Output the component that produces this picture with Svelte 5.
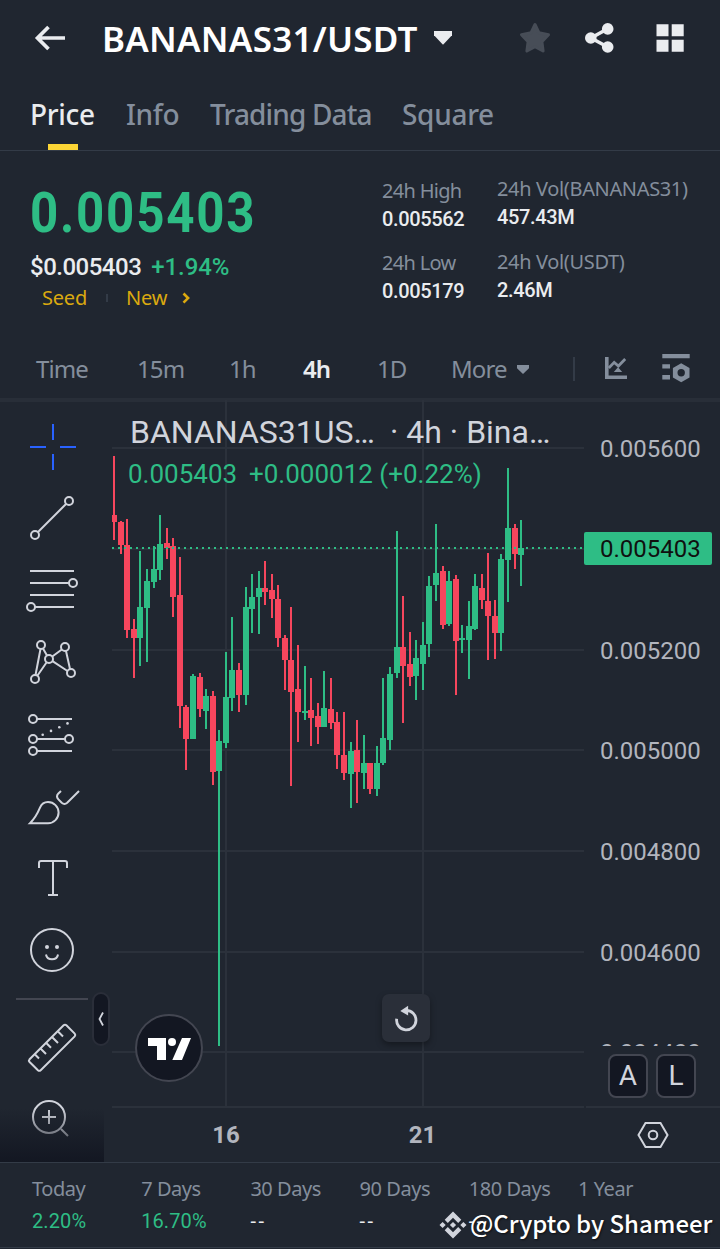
<script>
	const tabs = ['Price', 'Info', 'Trading Data', 'Square'];
	let activeTab = $state('Price');

	const intervals = ['Time', '15m', '1h', '4h', '1D'];
	let activeInterval = $state('4h');

	const stats = [
		[
			{ label: '24h High', value: '0.005562' },
			{ label: '24h Low', value: '0.005179' }
		],
		[
			{ label: '24h Vol(BANANAS31)', value: '457.43M' },
			{ label: '24h Vol(USDT)', value: '2.46M' }
		]
	];

	const performance = [
		{ label: 'Today', value: '2.20%', up: true },
		{ label: '7 Days', value: '16.70%', up: true },
		{ label: '30 Days', value: '--' },
		{ label: '90 Days', value: '--' },
		{ label: '180 Days', value: '--' },
		{ label: '1 Year', value: '' }
	];

	const gridRows = [448, 549, 650, 750, 851, 952, 1052];
	const gridCols = [226, 423];

	const priceLabels = [
		{ y: 448, text: '0.005600' },
		{ y: 650, text: '0.005200' },
		{ y: 750, text: '0.005000' },
		{ y: 851, text: '0.004800' },
		{ y: 952, text: '0.004600' },
		{ y: 1052, text: '0.004400' }
	];

	// x, high, low, body top, body bottom, rising
	const candles = [
		[113, 456, 540, 515, 522, 0],
		[120, 521, 554, 522, 545, 0],
		[126, 519, 638, 545, 630, 0],
		[133, 619, 678, 629, 638, 0],
		[139, 551, 666, 607, 638, 1],
		[146, 569, 662, 581, 608, 1],
		[153, 546, 588, 569, 582, 1],
		[159, 515, 580, 544, 570, 1],
		[166, 528, 559, 543, 548, 0],
		[172, 538, 617, 546, 597, 0],
		[179, 557, 728, 595, 706, 0],
		[185, 705, 770, 707, 739, 0],
		[192, 674, 739, 676, 739, 1],
		[199, 673, 717, 677, 709, 0],
		[205, 689, 729, 696, 711, 1],
		[212, 691, 785, 696, 772, 0],
		[218, 730, 1046, 741, 771, 1],
		[225, 652, 748, 697, 743, 1],
		[231, 617, 711, 670, 698, 1],
		[238, 663, 712, 670, 695, 0],
		[245, 587, 705, 607, 695, 1],
		[251, 574, 633, 597, 609, 1],
		[258, 571, 634, 588, 597, 1],
		[264, 561, 605, 588, 592, 0],
		[271, 574, 618, 590, 599, 0],
		[277, 585, 647, 599, 638, 0],
		[284, 635, 690, 638, 660, 0],
		[290, 607, 786, 660, 692, 0],
		[297, 645, 742, 689, 712, 0],
		[304, 666, 720, 711, 713, 1],
		[310, 678, 746, 710, 718, 0],
		[317, 703, 744, 716, 727, 0],
		[323, 671, 727, 708, 727, 1],
		[330, 678, 729, 709, 723, 0],
		[336, 712, 769, 722, 755, 0],
		[343, 712, 780, 755, 773, 0],
		[350, 742, 808, 751, 774, 1],
		[356, 720, 803, 750, 772, 0],
		[363, 735, 789, 763, 773, 1],
		[369, 763, 794, 763, 789, 0],
		[376, 746, 796, 763, 789, 1],
		[382, 678, 765, 738, 763, 1],
		[389, 667, 750, 674, 740, 1],
		[396, 531, 678, 647, 673, 1],
		[402, 596, 723, 647, 666, 0],
		[409, 632, 686, 664, 677, 0],
		[415, 640, 700, 658, 676, 1],
		[422, 622, 690, 645, 664, 1],
		[428, 576, 657, 586, 644, 1],
		[435, 524, 601, 573, 585, 1],
		[442, 566, 629, 571, 625, 0],
		[448, 571, 626, 581, 624, 1],
		[455, 575, 695, 579, 641, 0],
		[461, 625, 653, 638, 640, 1],
		[468, 601, 679, 626, 640, 1],
		[474, 574, 630, 586, 629, 1],
		[481, 574, 609, 588, 600, 0],
		[487, 553, 660, 601, 616, 0],
		[494, 600, 659, 616, 633, 0],
		[500, 554, 651, 559, 633, 1],
		[507, 468, 602, 528, 560, 1],
		[514, 524, 569, 528, 554, 0],
		[520, 520, 586, 548, 555, 1]
	];
</script>

<div class="screen">
	<header class="topbar">
		<svg class="back" width="36" height="32" viewBox="32 22 36 32">
			<path d="M65 38H38M48.5 27 37.5 38l11 11" />
		</svg>
		<h1>BANANAS31/USDT</h1>
		<svg class="solid caret" width="18" height="14" viewBox="434 31 18 14">
			<path d="M434 31h18v4.2l-9 9.6-9-9.6z" />
		</svg>
		<svg class="star" width="32" height="32" viewBox="519 22 32 32">
			<path
				d="M535 24.5l3.9 8.2 9.6 1.9-6.6 7 1.2 9.4-8.1-4.3-8.1 4.3 1.2-9.4-6.6-7 9.6-1.9z"
			/>
		</svg>
		<svg class="solid share" width="32" height="32" viewBox="583 22 32 32">
			<path class="stroke" d="M607.7 28.8 591 38l16.7 9" />
			<circle cx="607.7" cy="28.9" r="5.8" />
			<circle cx="590.8" cy="38" r="5.8" />
			<circle cx="607.7" cy="47" r="5.8" />
		</svg>
		<svg class="solid apps" width="30" height="30" viewBox="655 23 30 30">
			<path
				d="M656.5 24.3h12v12h-12zM671.7 24.3h12v12h-12zM656.5 39.7h12v12h-12zM671.7 39.7h12v12h-12z"
			/>
		</svg>
	</header>

	<nav class="tabs">
		{#each tabs as tab}
			<button class:active={tab === activeTab} onclick={() => (activeTab = tab)}>{tab}</button>
		{/each}
	</nav>

	<section class="ticker">
		<div class="quote">
			<div class="last">0.005403</div>
			<div class="fiat"><span>$0.005403</span><span class="up">+1.94%</span></div>
			<div class="tags">
				<span>Seed</span>
				<i></i>
				<span>New</span>
				<svg width="9" height="12" viewBox="182 292 9 12">
					<path d="M183.5 293.5l4.6 4.6-4.6 4.6" />
				</svg>
			</div>
		</div>
		{#each stats as column, i}
			<dl class="stats" class:volume={i === 1}>
				{#each column as stat}
					<dt>{stat.label}</dt>
					<dd>{stat.value}</dd>
				{/each}
			</dl>
		{/each}
	</section>

	<div class="intervals">
		{#each intervals as interval}
			<button
				class:active={interval === activeInterval}
				onclick={() => (activeInterval = interval)}>{interval}</button
			>
		{/each}
		<button class="more">
			<span>More</span>
			<svg width="12" height="9" viewBox="515 363 12 9">
				<path d="M515 363h12v3.2l-6 5.8-6-5.8z" />
			</svg>
		</button>
		<i></i>
		<svg class="tool" width="24" height="24" viewBox="604 356 24 24">
			<path class="axis" d="M606.8 357v20.2H627" />
			<path class="trend" d="M608.8 368l5.4-5.6 4.2 3.6 6.8-6.9" />
			<path d="M618 367.3l4.2 4.7h-8.4z" />
		</svg>
		<svg class="tool" width="28" height="30" viewBox="662 354 28 30">
			<path
				d="M662.3 355h27.4v4.3h-27.4zM662.3 365.3h7.7v4.3h-7.7zM662.3 376h7.7v4.5h-7.7z"
			/>
			<path
				fill-rule="evenodd"
				d="M681.2 364.3l8.3 4.7v9.4l-8.3 4.8-8.3-4.8V369zM681.2 370a3.7 3.7 0 1 0 0 7.4 3.7 3.7 0 0 0 0-7.4z"
			/>
		</svg>
	</div>

	<section class="chart">
		<aside class="toolbar">
			<!-- cursor -->
			<svg class="cross" viewBox="0 0 104 72">
				<path d="M53 13v16M53 43v16M30 36h16M60 36h16" />
			</svg>
			<!-- trend line -->
			<svg viewBox="0 0 104 72">
				<circle cx="69" cy="18" r="4" />
				<circle cx="35" cy="52" r="4" />
				<path d="M38 49l28-28" />
			</svg>
			<!-- fib retracement -->
			<svg viewBox="0 0 104 72">
				<path d="M30 16h44M30 28h39M30 40h44M35 52h39" />
				<circle cx="73" cy="28" r="4" />
				<circle cx="31" cy="52" r="4" />
			</svg>
			<!-- pattern -->
			<svg viewBox="0 0 104 72">
				<path
					d="M35.500 48l5-26M43 21.500l4 7M46.500 35.500l-9 13M52.300 29.500l9.500-7M66 24l4 18M67.500 44l-15-9.800"
				/>
				<circle cx="41" cy="18" r="4" />
				<circle cx="65" cy="20" r="4" />
				<circle cx="49" cy="32" r="4" />
				<circle cx="35" cy="52" r="4" />
				<circle cx="71" cy="46" r="4" />
			</svg>
			<!-- forecast -->
			<svg viewBox="0 0 104 72">
				<path d="M37 20h35M37 40h28M37 52h35" />
				<circle cx="33" cy="20" r="4" />
				<circle cx="33" cy="40" r="4" />
				<circle cx="69" cy="40" r="4" />
				<circle cx="33" cy="52" r="4" />
				<g class="dots">
					<circle cx="42.700" cy="35.700" r="1.300" />
					<circle cx="51" cy="31.900" r="1.300" />
					<circle cx="59.300" cy="28.200" r="1.300" />
					<circle cx="67.500" cy="24.400" r="1.300" />
				</g>
			</svg>
			<!-- brush -->
			<svg viewBox="0 0 104 72">
				<path
					d="M30 52.200H48a10.600 10.600 0 0 0 0-21.200c-4.300 0-6.700 2.500-8 5.700-2.400 5.700-5 10.700-10 15.500z"
				/>
				<path d="M61 20l-2.600 2.400q-2.800 3 0 6l3.300 3.400q2.800 2.300 5.500 0L79 20" />
			</svg>
			<!-- text -->
			<svg viewBox="0 0 104 72">
				<path d="M39 25v-5q0-2 2-2h24q2 0 2 2v5M53 18v34M48 52h10" />
			</svg>
			<!-- emoji -->
			<svg viewBox="0 0 104 72">
				<circle cx="52" cy="35" r="21" />
				<path d="M46 39.500c1 6.300 11 6.300 12 0" />
				<g class="dots">
					<circle cx="47" cy="32" r="2" />
					<circle cx="57" cy="32" r="2" />
				</g>
			</svg>
			<hr />
			<!-- measure -->
			<svg viewBox="0 0 104 72">
				<path
					d="M63.600 13.300q1.400-1.200 2.800 0l8.300 8.300q1.200 1.400 0 2.800L40.700 58.200q-1.400 1.200-2.800 0L29.600 50q-1.200-1.400 0-2.800z"
				/>
				<path
					d="M35 42.500l4 4M40.500 36.500l5.500 5.500M46.300 31l4.700 4.700M52 25l6 6M58 19.500l5 5"
				/>
			</svg>
			<!-- zoom in -->
			<svg viewBox="0 0 104 72">
				<circle cx="49" cy="33" r="16" />
				<path d="M42 33h14M49 26v14M61 45l7 7" />
			</svg>
			<div class="fade"></div>
			<button class="collapse" aria-label="Hide drawings toolbar">
				<svg width="6" height="16" viewBox="0 0 6 16"><path d="M5 1.500L1.500 8 5 14.500" /></svg>
			</button>
		</aside>

		<svg class="plot" width="616" height="762" viewBox="104 400 616 762">
			<g class="grid">
				{#each gridRows as y}
					<path d="M112 {y}H584" />
				{/each}
				{#each gridCols as x}
					<path d="M{x} 400V1106" />
				{/each}
				<path d="M112 1107H584M586 1107H720" />
			</g>

			{#each candles as [x, high, low, top, bottom, up]}
				<g class={up ? 'rise' : 'fall'}>
					<rect {x} y={high} width="2" height={low - high} />
					<rect
						x={Math.max(112, x - 2)}
						y={top}
						width={x === 113 ? 5 : 6}
						height={bottom - top}
					/>
				</g>
			{/each}
			<path class="last-line" d="M112 548H584" />

			<g class="legend">
				<text class="symbol" x="130" y="443">BANANAS31US…</text>
				<text class="symbol" x="390" y="443">· 4h · Bina…</text>
				<text class="change" x="128" y="483">0.005403</text>
				<text class="change" x="249" y="483">+0.000012 (+0.22%)</text>
			</g>

			<clipPath id="axis-clip"><rect x="584" y="400" width="136" height="646" /></clipPath>
			<g class="prices" clip-path="url(#axis-clip)">
				{#each priceLabels as label}
					<text x="600" y={label.y + 9}>{label.text}</text>
				{/each}
				<rect x="584" y="532" width="128" height="33" rx="2" />
				<text class="current" x="600" y="557">0.005403</text>
			</g>

			<g class="dates">
				<text x="226" y="1143">16</text>
				<text x="422.500" y="1143">21</text>
			</g>

			<g class="hex">
				<path d="M645.500 1123h15l7 12-7 12h-15l-7-12z" />
				<circle cx="653" cy="1135" r="4.300" />
			</g>

			<g class="brand">
				<circle cx="169" cy="1048" r="33" />
				<path d="M148 1038h18v22h-9v-14h-9zM182 1038h9l-9 22h-9.700z" />
				<circle class="dot" cx="172" cy="1042" r="4" />
			</g>
		</svg>

		<button class="reset" aria-label="Reset chart">
			<svg width="48" height="48" viewBox="382 994 48 48">
				<path class="arc" d="M396.700 1018.700A9.700 9.700 0 1 0 406 1010.500" />
				<path d="M400.300 1011l7.800-5.300v9.800z" />
			</svg>
		</button>
		<div class="scale">
			<button>A</button>
			<button>L</button>
		</div>
	</section>

	<footer class="performance">
		{#each performance as item}
			<div>
				<span>{item.label}</span>
				<b class:up={item.up} class:empty={item.value === '--'}>{item.value}</b>
			</div>
		{/each}
		<div class="watermark">
			<svg width="28" height="28" viewBox="0 0 28 28">
				<path
					d="M14 .5l8.300 8.300-3.100 3.100L14 6.700l-5.200 5.200-3.100-3.100zM14 27.500l8.300-8.300-3.100-3.100-5.200 5.200-5.200-5.200-3.100 3.100zM14 10.900l3.100 3.100-3.100 3.100-3.100-3.100zM3.600 10.900L6.700 14l-3.100 3.100L.5 14zM24.400 10.900l3.100 3.100-3.100 3.100-3.100-3.100z"
				/>
			</svg>
			<span>@Crypto by Shameer</span>
		</div>
	</footer>
</div>

<style>
	:global(body) {
		background: #202630;
	}

	.screen {
		width: 720px;
		height: 1249px;
		overflow: hidden;
		background: #202630;
		color: #eaecef;
		font-family: 'Noto Sans', sans-serif;
	}

	svg {
		display: block;
		flex: none;
	}

	button {
		padding: 0;
		border: 0;
		background: none;
		color: inherit;
		font: inherit;
		letter-spacing: inherit;
		text-align: left;
		white-space: nowrap;
	}

	.topbar {
		display: flex;
		align-items: center;
		height: 76px;
		padding-left: 32px;
	}

	.topbar h1 {
		width: 332px;
		margin: 2px 0 0 34px;
		color: #fff;
		font-size: 35px;
		font-weight: 600;
		line-height: 48px;
		letter-spacing: 0.25px;
		white-space: nowrap;
	}

	.back path {
		fill: none;
		stroke: #eaecef;
		stroke-width: 3.7;
	}

	.solid {
		fill: #eaecef;
	}

	.star {
		margin-left: 67px;
		fill: #474d57;
		stroke: #474d57;
		stroke-width: 3;
		stroke-linejoin: round;
	}

	.share {
		margin-left: 32px;
	}

	.share .stroke {
		fill: none;
		stroke: #eaecef;
		stroke-width: 3.5;
	}

	.apps {
		margin-left: 40px;
	}

	.tabs {
		display: grid;
		grid-template-columns: 96px 84px 192px auto;
		height: 74px;
		padding-left: 30px;
		border-bottom: 1px solid #333b47;
		color: #848e9c;
		font-size: 28px;
		font-weight: 500;
		letter-spacing: -0.3px;
	}

	.tabs button {
		position: relative;
		height: 74px;
		line-height: 76px;
	}

	.tabs button:nth-child(3) {
		letter-spacing: -0.85px;
	}

	.tabs .active {
		color: #eaecef;
	}

	.tabs .active::after {
		content: '';
		position: absolute;
		left: 18px;
		bottom: 0;
		width: 30px;
		height: 6px;
		background: #fcd535;
	}

	.ticker {
		display: grid;
		grid-template-columns: 352px 115px auto;
		height: 189px;
		padding-left: 30px;
	}

	/* narrow, widely spaced numerals */
	.last {
		height: 60px;
		padding-top: 32px;
		color: #2ebd85;
		font: 700 56px/60px Roboto, sans-serif;
		letter-spacing: 2px;
		transform: scaleX(0.88);
		transform-origin: left;
	}

	.up {
		color: #2ebd85;
	}

	.fiat {
		display: flex;
		gap: 10px;
		height: 48px;
		font: 500 24px/48px Roboto, sans-serif;
		letter-spacing: -0.5px;
	}

	.fiat .up {
		letter-spacing: -0.1px;
	}

	.tags {
		display: flex;
		align-items: center;
		height: 14px;
		padding-left: 12px;
		color: #dba90f;
		font-size: 20px;
		line-height: 14px;
		letter-spacing: -0.2px;
	}

	.tags i {
		width: 2px;
		height: 8px;
		margin: 0 18px 0 19px;
		background: #333b47;
	}

	.tags svg {
		margin-left: 15px;
	}

	.tags path {
		fill: none;
		stroke: #dba90f;
		stroke-width: 2.6;
	}

	.stats {
		margin: 26px 0 0;
		font-size: 20px;
		line-height: 28px;
	}

	.stats.volume {
		margin-top: 23px;
		line-height: 29px;
	}

	.stats dt {
		color: #848e9c;
		letter-spacing: -0.7px;
	}

	.stats.volume dt {
		letter-spacing: -0.35px;
	}

	.stats dd {
		margin: 0 0 16px;
		font-family: Roboto, sans-serif;
		font-weight: 500;
		letter-spacing: -0.35px;
	}

	.stats.volume dd {
		margin-bottom: 15px;
	}

	.intervals {
		display: grid;
		grid-template-columns: 101px 92px 74px 74px 74px 122px 31px 58px auto;
		align-items: center;
		height: 58px;
		padding-left: 36px;
		border-bottom: 4px solid #282e38;
		color: #848e9c;
		font-size: 24px;
		line-height: 58px;
		letter-spacing: -0.9px;
	}

	.intervals .active {
		color: #eaecef;
		font-weight: 600;
	}

	.intervals i {
		width: 2px;
		height: 24px;
		background: #333b47;
	}

	.intervals svg {
		fill: #848e9c;
	}

	.more {
		display: flex;
		align-items: center;
		gap: 10px;
	}

	.intervals .tool {
		margin-bottom: 2px;
	}

	.tool .axis,
	.tool .trend {
		fill: none;
		stroke: #848e9c;
		stroke-width: 3.6;
	}

	.tool .trend {
		stroke-width: 2.8;
	}

	.chart {
		position: relative;
		display: flex;
		height: 760px;
		border-bottom: 1px solid #333b47;
		font-family: Roboto, sans-serif;
	}

	.toolbar {
		position: relative;
		width: 104px;
		height: 751px;
		padding-top: 9px;
	}

	.toolbar > svg {
		width: 104px;
		height: 72px;
		fill: none;
		stroke: #d1d4dc;
		stroke-width: 2;
	}

	.toolbar .cross {
		stroke: #2962ff;
	}

	.toolbar .dots {
		fill: #d1d4dc;
		stroke: none;
	}

	.toolbar hr {
		width: 72px;
		height: 2px;
		margin: 11px 16px 12px;
		border: 0;
		background: #434651;
	}

	.fade {
		position: absolute;
		left: 0;
		bottom: 0;
		width: 104px;
		height: 54px;
		background: linear-gradient(rgba(19, 23, 34, 0), #131722);
	}

	.collapse {
		position: absolute;
		left: 92px;
		top: 590px;
		display: grid;
		place-items: center;
		box-sizing: border-box;
		width: 18px;
		height: 54px;
		border: 2px solid #2a2e39;
		border-radius: 9px;
		background: #131722;
		z-index: 1;
	}

	.collapse path {
		fill: none;
		stroke: #d1d4dc;
		stroke-width: 1.8;
	}

	.plot {
		height: 762px;
		margin-top: -2px;
	}

	.grid {
		fill: none;
		stroke: #2b313b;
		stroke-width: 2;
	}

	.rise {
		fill: #2ebd85;
	}

	.fall {
		fill: #f6465d;
	}

	.last-line {
		stroke: #2ebd85;
		stroke-width: 2;
		stroke-dasharray: 2 4;
	}

	.symbol {
		fill: #d1d4dc;
		font-size: 32px;
	}

	.change {
		fill: #2ebd85;
		font-size: 26px;
	}

	.prices text {
		fill: #b2b5be;
		font-size: 24px;
	}

	.prices rect {
		fill: #2ebd85;
	}

	.prices .current {
		fill: #101010;
	}

	.dates {
		fill: #b2b5be;
		font-size: 24px;
		font-weight: 700;
		text-anchor: middle;
	}

	.hex {
		fill: none;
		stroke: #d1d4dc;
		stroke-width: 2;
	}

	.brand circle {
		fill: #131722;
		stroke: #434651;
		stroke-width: 2;
	}

	.brand path,
	.brand .dot {
		fill: #fff;
		stroke: none;
	}

	.reset {
		position: absolute;
		left: 382px;
		top: 592px;
		width: 48px;
		height: 48px;
		border-radius: 7px;
		background: #2a2f39;
		box-shadow: 0 3px 6px rgba(0, 0, 0, 0.35);
	}

	.reset svg {
		fill: #d1d4dc;
	}

	.reset .arc {
		fill: none;
		stroke: #d1d4dc;
		stroke-width: 2.8;
	}

	.scale {
		position: absolute;
		left: 608px;
		top: 652px;
		display: flex;
		gap: 8px;
	}

	.scale button {
		box-sizing: border-box;
		width: 40px;
		height: 44px;
		border: 2px solid #434651;
		border-radius: 8px;
		background: #131722;
		color: #d1d4dc;
		font-size: 28px;
		line-height: 40px;
		text-align: center;
	}

	.performance {
		position: relative;
		display: grid;
		grid-template-columns: repeat(6, 109.2px);
		height: 84px;
		padding-left: 32px;
		border-bottom: 1px solid #333b47;
		font-size: 20px;
	}

	.performance > div:not(.watermark) {
		display: flex;
		flex-direction: column;
		padding-top: 10px;
		line-height: 32px;
	}

	.performance div > span {
		color: #848e9c;
		letter-spacing: -0.45px;
		white-space: nowrap;
	}

	.performance b {
		font-family: Roboto, sans-serif;
		font-weight: 400;
		letter-spacing: 0.1px;
	}

	.performance .empty {
		letter-spacing: 2.5px;
	}

	.performance .watermark {
		position: absolute;
		left: 439px;
		top: 44px;
		display: flex;
		align-items: center;
		gap: 3px;
		height: 36px;
		fill: #d1d4dc;
	}

	.performance .watermark span {
		margin-top: -4px;
		color: #fff;
		font: 500 24px/36px 'Noto Sans CJK SC', sans-serif;
		letter-spacing: 0;
		text-shadow: 1px 1px 2px rgba(0, 0, 0, 0.6);
	}
</style>
